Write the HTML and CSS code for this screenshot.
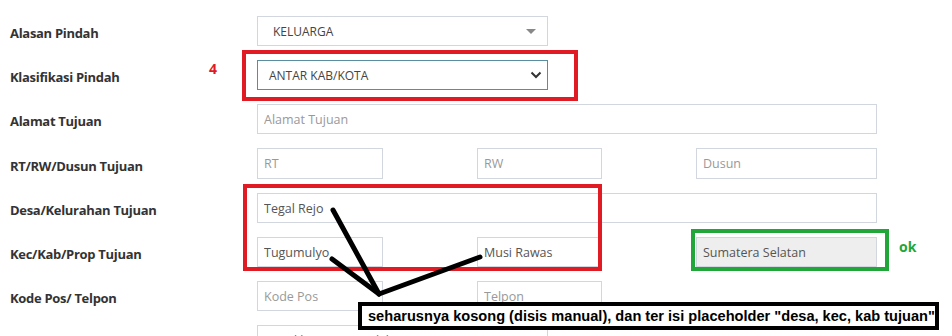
FILE: index.html
```html
<!DOCTYPE html>
<html lang="en">
<head>
    <meta charset="UTF-8" />
    <title>Data Kepindahan</title>
    <link rel="stylesheet" href="styles.css">
</head>
<body>

<div class="page">
    <form class="form">
        <div class="row">
            <label class="label">Alasan Pindah</label>
            <div class="field wide-half">
                <div class="select select-flat">
                    <span>KELUARGA</span>
                    <span class="caret"></span>
                </div>
            </div>
        </div>

        <div class="row">
            <label class="label">Klasifikasi Pindah</label>
            <div class="field wide-half">
                <div class="select select-focus">
                    <span>ANTAR KAB/KOTA</span>
                    <svg class="chevron" width="12" height="8" viewBox="0 0 12 8"><path d="M1.5 1.5 L6 6 L10.5 1.5" fill="none" stroke="#333" stroke-width="2"/></svg>
                </div>
            </div>
        </div>

        <div class="row">
            <label class="label">Alamat Tujuan</label>
            <div class="field">
                <input class="input" type="text" placeholder="Alamat Tujuan">
            </div>
        </div>

        <div class="row">
            <label class="label">RT/RW/Dusun Tujuan</label>
            <div class="field three">
                <input class="input" type="text" placeholder="RT">
                <input class="input" type="text" placeholder="RW">
                <input class="input" type="text" placeholder="Dusun">
            </div>
        </div>

        <div class="row">
            <label class="label">Desa/Kelurahan Tujuan</label>
            <div class="field">
                <input class="input" type="text" value="Tegal Rejo">
            </div>
        </div>

        <div class="row">
            <label class="label">Kec/Kab/Prop Tujuan</label>
            <div class="field three">
                <input class="input" type="text" value="Tugumulyo">
                <input class="input" type="text" value="Musi Rawas">
                <input class="input input-readonly" type="text" value="Sumatera Selatan" readonly>
            </div>
        </div>

        <div class="row">
            <label class="label">Kode Pos/ Telpon</label>
            <div class="field three">
                <input class="input" type="text" placeholder="Kode Pos">
                <input class="input" type="text" placeholder="Telpon">
            </div>
        </div>

        <div class="row">
            <label class="label">Jenis Kepindahan</label>
            <div class="field wide-half">
                <div class="select select-flat">
                    <span class="muted">-- Pilih Jenis Kepindahan --</span>
                    <span class="caret"></span>
                </div>
            </div>
        </div>
    </form>

    <!-- review notes drawn over the form -->
    <div class="mark mark-red box-klasifikasi"></div>
    <div class="mark mark-red box-desa"></div>
    <div class="mark mark-green box-prop"></div>
    <span class="note-num">4</span>
    <span class="note-ok">ok</span>

    <svg class="arrows" width="952" height="336" viewBox="0 0 952 336">
        <g stroke="#000" stroke-width="5" stroke-linecap="round">
            <line x1="333" y1="210" x2="379" y2="294" />
            <line x1="332" y1="259" x2="379" y2="294" />
            <line x1="480" y1="257" x2="379" y2="294" />
        </g>
    </svg>

    <div class="note-text">seharusnya kosong (disis manual), dan ter isi placeholder "desa, kec, kab tujuan"</div>
</div>

</body>
</html>
```

FILE: styles.css
```css
body {
    margin: 0;
    background: #fff;
    font-family: "Open Sans", "Noto Sans", sans-serif;
    color: #333;
    overflow: hidden;
}

.page {
    position: relative;
    width: 952px;
    height: 336px;
    overflow: hidden;
}

.form {
    display: flex;
    flex-direction: column;
    gap: 14px;
    padding-top: 16px;
}

.row {
    display: flex;
    align-items: center;
    height: 30px;
}

.row:nth-child(4) {
    height: 31px;
}

.label {
    width: 247px;
    padding-left: 10px;
    padding-top: 4px;
    font-size: 13px;
    font-weight: bold;
    color: #333;
    letter-spacing: -0.3px;
}

.field {
    width: 620px;
    height: 100%;
}

.field.wide-half {
    width: 291px;
}

.field.three {
    display: grid;
    grid-template-columns: 126px 125px 181px;
    column-gap: 94px;
}

.input {
    box-sizing: border-box;
    width: 100%;
    height: 100%;
    margin: 0;
    padding: 0 6px;
    border: 1px solid #d2d6de;
    background: #fff;
    font-family: inherit;
    font-size: 12.5px;
    color: #555;
    outline: none;
}

.input::placeholder {
    color: #999;
}

.input-readonly {
    background: #eee;
}

.select {
    box-sizing: border-box;
    display: flex;
    align-items: center;
    justify-content: space-between;
    height: 100%;
    font-size: 12px;
    color: #444;
}

.select-flat {
    border: 1px solid #d2d6de;
    padding: 0 11px 0 15px;
}

.select-focus {
    border: 1px solid #5b8da0;
    padding: 0 5px 0 11px;
}

.muted {
    color: #666;
}

.caret {
    width: 0;
    height: 0;
    border-left: 5px solid transparent;
    border-right: 5px solid transparent;
    border-top: 5px solid #888;
}

.mark {
    position: absolute;
    box-sizing: border-box;
}

.mark-red {
    border: 4px solid #e01b24;
}

.mark-green {
    border: 4px solid #21a63a;
}

.box-klasifikasi {
    left: 242px;
    top: 50px;
    width: 336px;
    height: 51px;
}

.box-desa {
    left: 243px;
    top: 184px;
    width: 359px;
    height: 87px;
}

.box-prop {
    left: 691px;
    top: 229px;
    width: 198px;
    height: 42px;
}

.note-num {
    position: absolute;
    left: 209px;
    top: 59px;
    font-size: 14px;
    font-weight: bold;
    color: #e01b24;
}

.note-ok {
    position: absolute;
    left: 899px;
    top: 237px;
    font-size: 14px;
    font-weight: bold;
    color: #21a63a;
}

.arrows {
    position: absolute;
    left: 0;
    top: 0;
}

.note-text {
    position: absolute;
    left: 358px;
    top: 302px;
    box-sizing: border-box;
    width: 581px;
    height: 28px;
    padding: 0 0 0 6px;
    border: 4px solid #000;
    background: #fff;
    font-family: "Liberation Sans", Arial, sans-serif;
    font-size: 14.6px;
    font-weight: bold;
    line-height: 20px;
    color: #000;
    white-space: nowrap;
    overflow: hidden;
}
```
